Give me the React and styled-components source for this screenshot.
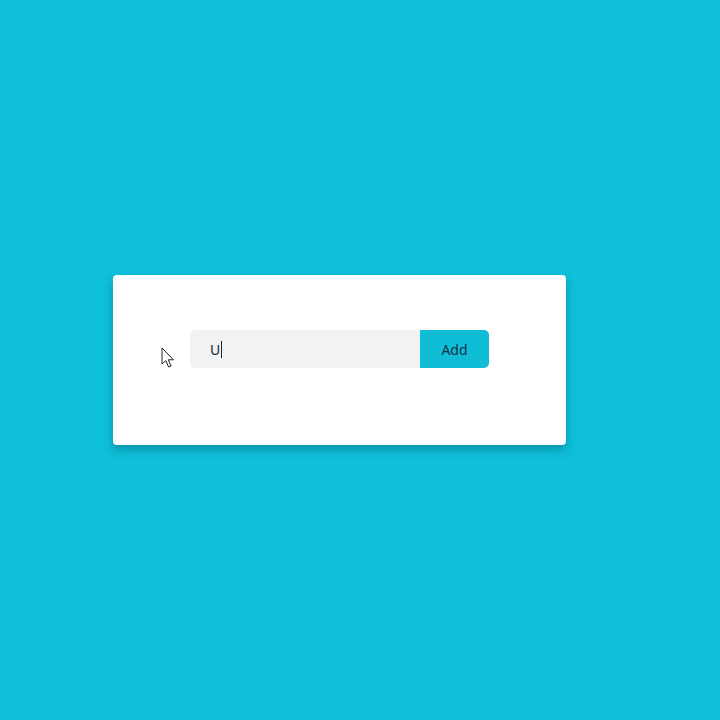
import React from "react";
import styled, { createGlobalStyle } from "styled-components";

const Global = createGlobalStyle`
  html, body { margin: 0; padding: 0; background: #0ec0da; }
  body { font-family: "Noto Sans", "Open Sans", sans-serif; }
`;

const Page = styled.div`
  min-height: 720px;
  background: #0ec0da;
  padding: 275px 0 0 113px;
  box-sizing: border-box;
`;

const Card = styled.div`
  position: relative;
  width: 453px;
  height: 170px;
  box-sizing: border-box;
  background: #ffffff;
  border-radius: 4px;
  padding: 55px 77px 77px 77px;
  box-shadow: 0 5px 10px rgba(0, 60, 80, 0.35);
`;

const Form = styled.div`
  display: flex;
  height: 38px;
`;

const Field = styled.div`
  flex: 1;
  display: flex;
  align-items: center;
  background: #f0f2f3;
  border-radius: 5px 0 0 5px;
  padding-left: 20px;
  font-size: 14px;
  color: #1d2530;
`;

const Caret = styled.span`
  display: inline-block;
  width: 1px;
  height: 17px;
  background: #1d2530;
  margin-left: 1px;
`;

const AddButton = styled.button`
  width: 69px;
  border: none;
  background: #0fbdd7;
  color: #17314d;
  font-family: "Noto Sans", "Open Sans", sans-serif;
  font-size: 14px;
  border-radius: 0 5px 5px 0;
  padding: 0;
`;

const Pointer = styled.svg`
  position: absolute;
  left: 48px;
  top: 72px;
`;

export default function App() {
  return (
    <>
      <Global />
      <Page>
        <Card>
          <Form>
            <Field>
              U<Caret />
            </Field>
            <AddButton>Add</AddButton>
          </Form>
          <Pointer width="16" height="22" viewBox="0 0 16 22">
            <path
              d="M1 1 L1 17 L4.8 13.6 L7.6 20 L10 19 L7.3 12.8 L12.5 12.8 Z"
              fill="#fff"
              stroke="#222"
              strokeWidth="1"
              strokeLinejoin="round"
            />
          </Pointer>
        </Card>
      </Page>
    </>
  );
}
